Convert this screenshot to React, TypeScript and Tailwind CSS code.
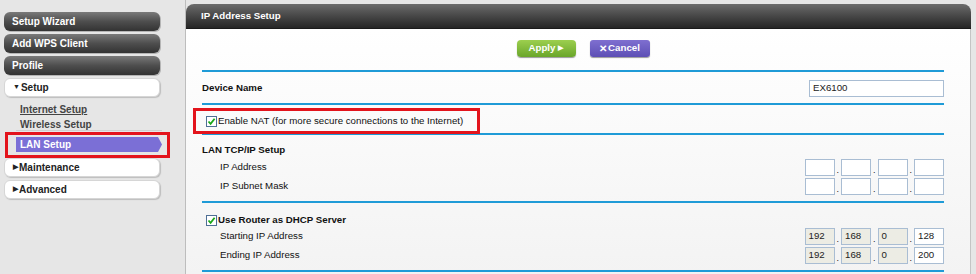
import React from "react";

const font = { fontFamily: '"Liberation Sans", Arial, sans-serif' };

function DarkBtn({ label }: { label: string }) {
  return (
    <div className="h-[19px] w-[156px] rounded-[6px] bg-gradient-to-b from-[#7a7a7a] via-[#4e4e4e] to-[#333333] shadow-[1px_1px_0_#b5b5b5] flex items-center pl-[8px] text-white font-bold text-[10px]">
      {label}
    </div>
  );
}

function LightBtn({ label, arrow }: { label: string; arrow: "down" | "right" }) {
  return (
    <div className="h-[19px] w-[156px] rounded-[6px] bg-white border border-[#d6d6d6] shadow-[1px_1px_1px_#bdbdbd] flex items-center pl-[8px] text-[#222] font-bold text-[10px]">
      <span className="text-[7px] mr-[1px]">{arrow === "down" ? "▼" : "▶"}</span>
      {label}
    </div>
  );
}

function Line() {
  return <div className="h-[2px] bg-[#1f9bd7]" />;
}

function Box({ v, disabled, w = 30 }: { v?: string; disabled?: boolean; w?: number }) {
  return (
    <div
      className={`h-[17px] border border-[#a9bdd3] flex items-center pl-[3px] text-[9.7px] text-[#222] ${
        disabled ? "bg-[#ecece4]" : "bg-white"
      }`}
      style={{ width: w }}
    >
      {v}
    </div>
  );
}

function IpRow({ vals, disabledFirst3 }: { vals?: string[]; disabledFirst3?: boolean }) {
  const v = vals ?? ["", "", "", ""];
  return (
    <div className="flex items-center">
      <Box v={v[0]} disabled={disabledFirst3} />
      <span className="w-[6.5px] text-center text-[9px] leading-none pt-[5px]">.</span>
      <Box v={v[1]} disabled={disabledFirst3} />
      <span className="w-[6.5px] text-center text-[9px] leading-none pt-[5px]">.</span>
      <Box v={v[2]} disabled={disabledFirst3} />
      <span className="w-[6.5px] text-center text-[9px] leading-none pt-[5px]">.</span>
      <Box v={v[3]} />
    </div>
  );
}

function Check() {
  return (
    <div className="w-[11px] h-[11px] border border-[#4f6f95] bg-white flex items-center justify-center">
      <svg width="9" height="9" viewBox="0 0 9 9">
        <path d="M1.5 4.5 L3.6 6.8 L7.6 1.8" stroke="#1aa81a" strokeWidth="1.8" fill="none" />
      </svg>
    </div>
  );
}

export default function App() {
  return (
    <div className="relative w-[976px] h-[274px] overflow-hidden bg-[#e6e6e6] flex text-[#111]" style={font}>
      {/* Sidebar */}
      <div className="w-[186px] h-full border-r border-[#bdbdbd] pl-[4px] pt-[12px] flex flex-col">
        <div className="flex flex-col gap-[3px]">
          <DarkBtn label="Setup Wizard" />
          <DarkBtn label="Add WPS Client" />
          <DarkBtn label="Profile" />
          <LightBtn label="Setup" arrow="down" />
        </div>
        <div className="mt-[4px] w-[158px] pl-[12px]">
          <div className="h-[17px] flex items-center pl-[4px] text-[10px] font-bold text-[#444] underline">Internet Setup</div>
          <div className="h-[13px] flex items-center pl-[4px] text-[10px] font-bold text-[#444] border-b border-[#cfcfcf]">Wireless Setup</div>
          <div className="mt-[6px] flex h-[15px]">
            <div className="flex-1 bg-[#7b6fd6] flex items-center pl-[4px] text-white font-bold text-[10px]">LAN Setup</div>
            <svg width="8" height="15" viewBox="0 0 8 15" className="block">
              <path d="M0 0 L4 0 L8 7.5 L4 15 L0 15 Z" fill="#7b6fd6" />
            </svg>
          </div>
        </div>
        <div className="mt-[6px] flex flex-col gap-[3px]">
          <LightBtn label="Maintenance" arrow="right" />
          <LightBtn label="Advanced" arrow="right" />
        </div>
      </div>

      {/* Main panel */}
      <div className="flex-1 mr-[5px] pt-[4px] flex flex-col">
        <div className="h-[25px] rounded-t-[8px] bg-gradient-to-b from-[#6c6c6c] via-[#474747] to-[#262626] flex items-center pl-[15px] text-white font-bold text-[9.7px] border-b border-[#1a1a1a]">
          IP Address Setup
        </div>
        <div className="flex-1 bg-gradient-to-b from-[#ffffff] to-[#f3f3f3] border-r border-[#c4c4c4] pl-[16px] pr-[26px]">
          <div className="mt-[11px] h-[17px] flex justify-center gap-[14px]">
            <div className="ml-[20px] w-[59px] h-[17px] rounded-[4px] bg-gradient-to-b from-[#9ccf4e] to-[#6aa62a] flex items-center justify-center text-white font-bold text-[9.7px] shadow-[0_1px_1px_#9a9a9a]">
              Apply <span className="ml-[3px] text-[7px]">▶</span>
            </div>
            <div className="w-[60px] h-[17px] rounded-[3px] bg-gradient-to-b from-[#7f6fd0] to-[#5d4fb5] flex items-center justify-center text-white font-bold text-[9.7px] shadow-[0_1px_1px_#9a9a9a]">
              <span className="mr-[1px] text-[10px]">✕</span>Cancel
            </div>
          </div>
          <div className="mt-[13px]">
            <Line />
          </div>
          <div className="h-[31px] flex items-center justify-between pt-[2px]">
            <span className="font-bold text-[9.7px]">Device Name</span>
            <Box v="EX6100" w={135} />
          </div>
          <Line />
          <div className="h-[28px] flex items-center pl-[4px] pt-[5px] text-[9.7px]">
            <Check />
            <span className="ml-[1px]">Enable NAT (for more secure connections to the Internet)</span>
          </div>
          <Line />
          <div className="h-[14px] mt-[8px] flex items-center font-bold text-[9.7px]">LAN TCP/IP Setup</div>
          <div className="mt-[2px] flex items-center justify-between h-[17px]">
            <span className="pl-[18px] text-[9.7px]">IP Address</span>
            <IpRow />
          </div>
          <div className="mt-[2px] flex items-center justify-between h-[17px]">
            <span className="pl-[18px] text-[9.7px]">IP Subnet Mask</span>
            <IpRow />
          </div>
          <div className="mt-[6px]">
            <Line />
          </div>
          <div className="h-[14px] mt-[10px] flex items-center pl-[4px] text-[9.7px] font-bold">
            <Check />
            <span className="ml-[1px]">Use Router as DHCP Server</span>
          </div>
          <div className="mt-[1px] flex items-center justify-between h-[17px]">
            <span className="pl-[18px] text-[9.7px]">Starting IP Address</span>
            <IpRow vals={["192", "168", "0", "128"]} disabledFirst3 />
          </div>
          <div className="mt-[2px] flex items-center justify-between h-[17px]">
            <span className="pl-[18px] text-[9.7px]">Ending IP Address</span>
            <IpRow vals={["192", "168", "0", "200"]} disabledFirst3 />
          </div>
          <div className="mt-[6px]">
            <Line />
          </div>
        </div>
      </div>

      {/* Red highlight boxes */}
      <div className="absolute left-[5px] top-[132px] w-[165px] h-[26px] border-[3px] border-[#e3141c]" />
      <div className="absolute left-[193px] top-[108px] w-[287px] h-[26px] border-[3px] border-[#e3141c]" />
    </div>
  );
}
